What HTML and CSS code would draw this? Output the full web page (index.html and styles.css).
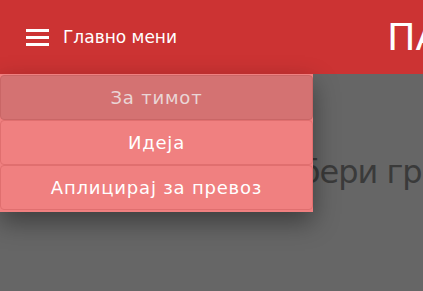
FILE: index.html
```html
<!DOCTYPE html>
<html lang="mk">
<head>
<meta charset="utf-8">
<link rel="stylesheet" href="styles.css">
</head>
<body>
<header class="topbar">
  <button class="menu-btn">
    <span class="burger"><span></span><span></span><span></span></span>
    <span class="menu-label">Главно мени</span>
  </button>
  <h1 class="title">ПАРТНЕРИ</h1>
  <nav class="dropdown">
    <a class="item item-active">За тимот</a>
    <a class="item">Идеја</a>
    <a class="item">Аплицирај за превоз</a>
  </nav>
</header>
<main class="content">
  <h2 class="subtitle">Избери град</h2>
</main>
</body>
</html>
```
FILE: styles.css
```css
* { box-sizing: border-box; }
html, body { margin: 0; padding: 0; }
body {
  width: 423px;
  height: 291px;
  overflow: hidden;
  background: #666666;
  font-family: "DejaVu Sans", sans-serif;
}
.topbar {
  position: relative;
  height: 74px;
  background: #cc3333;
  display: flex;
  align-items: center;
  white-space: nowrap;
  z-index: 2;
}
.menu-btn {
  display: flex;
  align-items: center;
  gap: 14px;
  padding: 0 0 0 26px;
  margin: 0;
  border: 0;
  background: none;
  color: #fff;
  font: inherit;
  flex-shrink: 0;
}
.burger {
  display: flex;
  flex-direction: column;
  gap: 4px;
  width: 23px;
}
.burger span {
  display: block;
  height: 3px;
  background: #fff;
}
.menu-label {
  font-size: 17px;
  letter-spacing: 0;
}
.title {
  margin: 0 0 0 210px;
  font-weight: normal;
  font-size: 38px;
  color: #fff;
  flex-shrink: 0;
}
.dropdown {
  position: absolute;
  left: 0;
  top: 74px;
  width: 313px;
  background: #f08080;
  padding: 1px 0 2px;
  display: flex;
  flex-direction: column;
  box-shadow: 0 10px 24px rgba(0,0,0,0.4);
}
.item {
  display: flex;
  align-items: center;
  justify-content: center;
  height: 45px;
  border: 1px solid #e06f6f;
  border-radius: 4px;
  color: #fff;
  font-size: 18px;
  letter-spacing: 0.8px;
}
.item-active {
  background: #d47272;
  color: #ead6d6;
  border-color: #c96666;
}
.content {
  padding: 82px 0 0 262px;
}
.subtitle {
  margin: 0;
  font-weight: normal;
  font-size: 32px;
  line-height: 32px;
  letter-spacing: -1px;
  color: #3a3a3a;
  white-space: nowrap;
}
```
